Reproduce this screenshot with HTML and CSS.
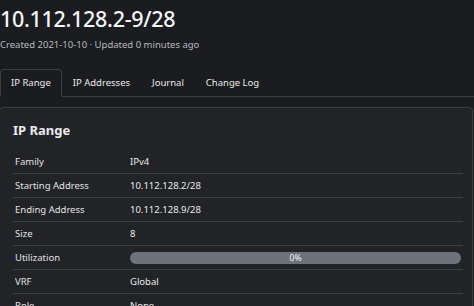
FILE: index.html
```html
<!DOCTYPE html>
<html>
<head>
<meta charset="utf-8">
<link rel="stylesheet" href="styles.css">
</head>
<body>
<div class="page">
  <h1 class="title">10.112.128.2-9/28</h1>
  <div class="meta">Created 2021-10-10 · Updated 0 minutes ago</div>
  <ul class="tabs">
    <li class="tab active">IP Range</li>
    <li class="tab">IP Addresses</li>
    <li class="tab">Journal</li>
    <li class="tab">Change Log</li>
  </ul>
  <div class="card">
    <h2 class="card-title">IP Range</h2>
    <table class="attrs">
      <tr><th>Family</th><td>IPv4</td></tr>
      <tr><th>Starting Address</th><td>10.112.128.2/28</td></tr>
      <tr><th>Ending Address</th><td>10.112.128.9/28</td></tr>
      <tr><th>Size</th><td>8</td></tr>
      <tr><th>Utilization</th><td><div class="progress"><span class="progress-label">0%</span></div></td></tr>
      <tr><th>VRF</th><td>Global</td></tr>
      <tr><th>Role</th><td>None</td></tr>
    </table>
  </div>
</div>
</body>
</html>
```
FILE: styles.css
```css
html, body {
  margin: 0;
  padding: 0;
  background: #1b1c1f;
  color: #e9eaec;
  font-family: "Noto Sans", "Open Sans", sans-serif;
  overflow: hidden;
}
.title {
  margin: 0;
  font-size: 21.5px;
  font-weight: 500;
  line-height: 37px;
  letter-spacing: -0.3px;
  color: #f4f5f6;
}
.meta {
  font-size: 9.5px;
  color: #b6b9bd;
  line-height: 16px;
}
.tabs {
  list-style: none;
  margin: 16px 0 0 0;
  padding: 0;
  display: flex;
  border-bottom: 1px solid #3a3d42;
}
.tab {
  font-size: 9.5px;
  line-height: 16px;
  padding: 5px 10px;
  margin-bottom: -1px;
  border: 1px solid transparent;
  border-radius: 4px 4px 0 0;
  color: #e9eaec;
}
.tab.active {
  border-color: #3a3d42 #3a3d42 #1b1c1f #3a3d42;
  background: #1b1c1f;
}
.card {
  margin: 10px 1px 0 -1px;
  border: 1px solid #3a3d42;
  border-radius: 4px;
  background: #212327;
  padding: 0 9px 0 13px;
}
.card-title {
  margin: 0;
  font-size: 13px;
  font-weight: 700;
  line-height: 20px;
  padding: 12px 0 10px 0;
}
.attrs {
  width: 100%;
  border-collapse: collapse;
  font-size: 9.5px;
}
.attrs th, .attrs td {
  text-align: left;
  font-weight: 400;
  padding: 4px 2px;
  height: 15px;
  border-bottom: 1px solid #3a3d42;
  line-height: 15px;
}
.attrs th {
  width: 111px;
  color: #e0e2e5;
}
.progress {
  height: 12px;
  border-radius: 6px;
  background: #6c737d;
  display: flex;
  align-items: center;
  justify-content: center;
}
.progress-label {
  font-size: 8.5px;
  color: #f4f5f6;
  line-height: 12px;
}
```
